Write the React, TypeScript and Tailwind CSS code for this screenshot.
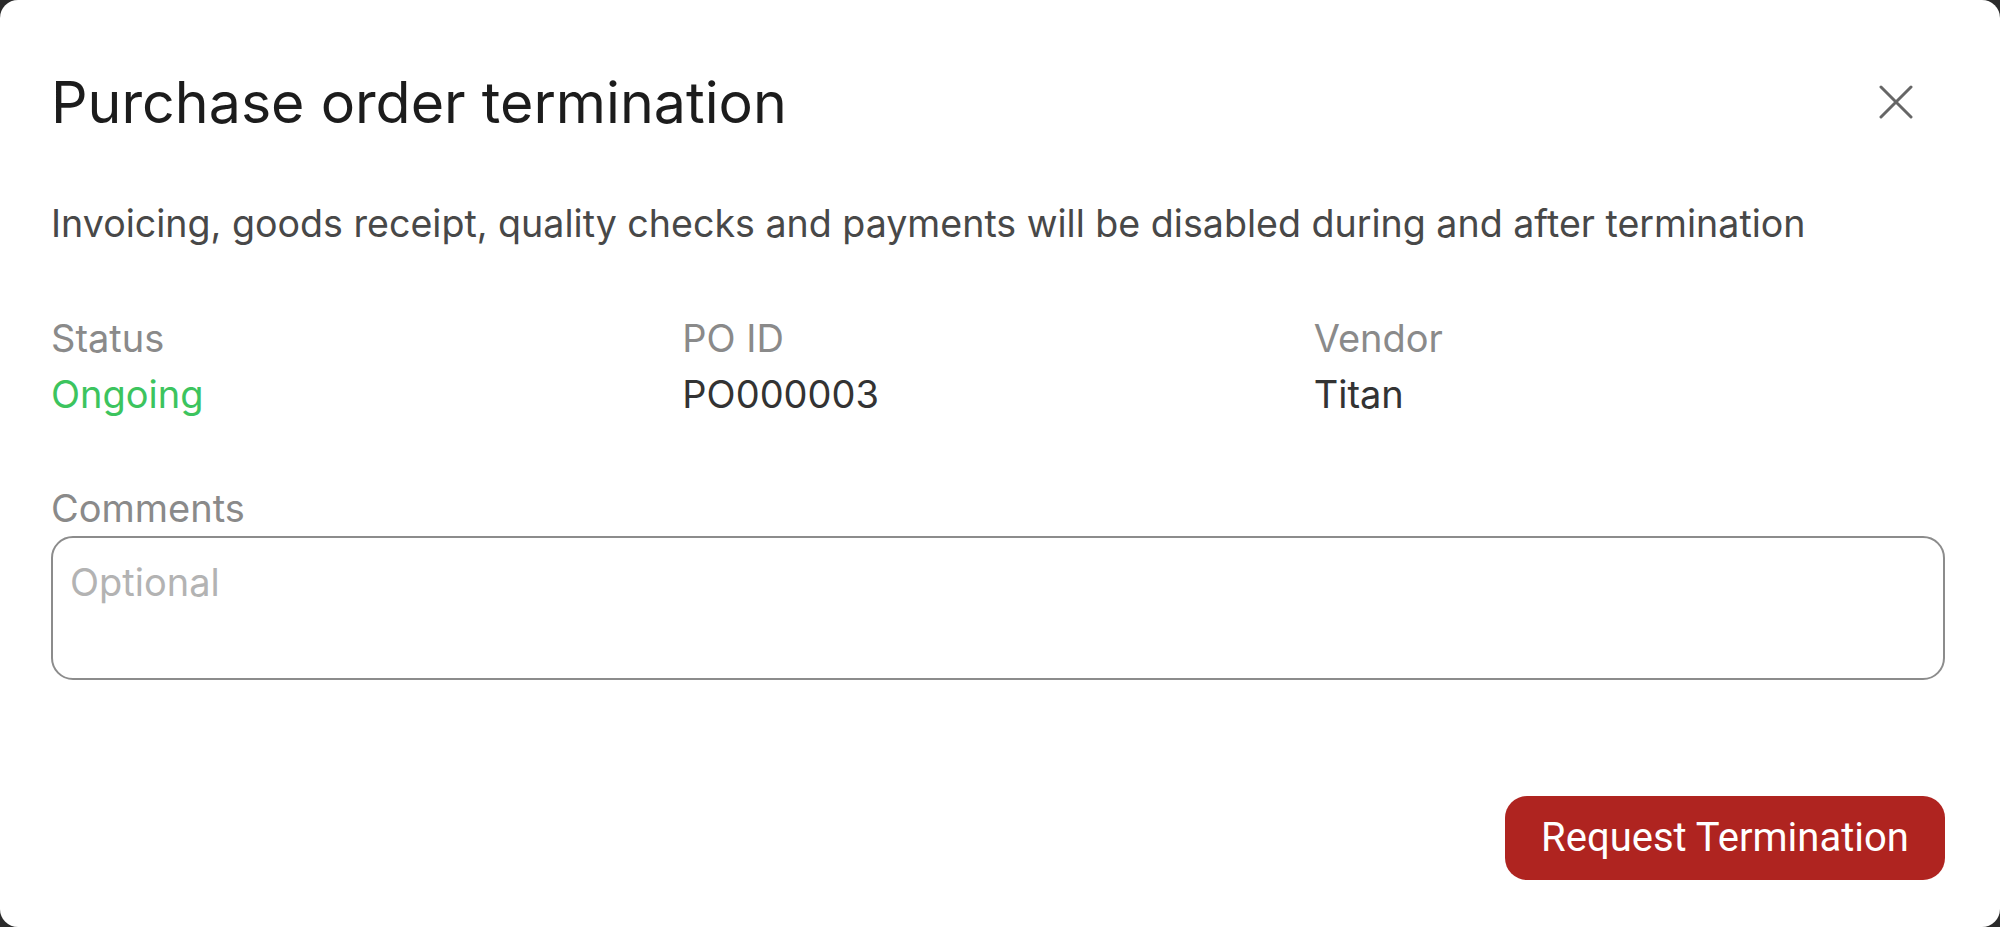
import React from "react";

export default function App() {
  return (
    <div className="h-screen w-screen bg-[#2b2b2b]">
      <div className="h-full w-full bg-white rounded-[18px] flex flex-col pl-[51px] pr-[55px] font-['Inter',sans-serif]">
        {/* header */}
        <div className="flex items-center justify-between pt-[66px]">
          <h1 className="text-[57.3px] leading-[72px] text-[#1c1c1c]">Purchase order termination</h1>
          <button className="w-[34px] h-[34px] flex items-center justify-center mr-[32px] text-[#666666]">
            <svg width="34" height="34" viewBox="0 0 34 34" fill="none" stroke="currentColor" strokeWidth="3" strokeLinecap="round">
              <path d="M2 2 L32 32 M32 2 L2 32" />
            </svg>
          </button>
        </div>

        <p className="mt-[62px] text-[37.6px] leading-[48px] text-[#484848]">
          Invoicing, goods receipt, quality checks and payments will be disabled during and after termination
        </p>

        <div className="grid grid-cols-3 mt-[62px] text-[38px] leading-[56px]">
          <div className="flex flex-col">
            <span className="text-[#8a8a8a]">Status</span>
            <span className="text-[#3cc45e]">Ongoing</span>
          </div>
          <div className="flex flex-col">
            <span className="text-[#8a8a8a]">PO ID</span>
            <span className="text-[#333333]">PO000003</span>
          </div>
          <div className="flex flex-col">
            <span className="text-[#8a8a8a]">Vendor</span>
            <span className="text-[#333333]">Titan</span>
          </div>
        </div>

        <div className="mt-[62px] flex flex-col">
          <label className="text-[38px] leading-[48px] text-[#8a8a8a]">Comments</label>
          <textarea
            placeholder="Optional"
            className="mt-[4px] h-[144px] w-full rounded-[22px] border-2 border-[#8c8c8c] px-[17px] pt-[20px] pb-[10px] text-[38px] leading-[48px] text-[#333333] placeholder:text-[#b3b3b3] outline-none resize-none"
          />
        </div>

        <div className="flex justify-end mt-[116px]">
          <button className="h-[84px] w-[440px] rounded-[22px] bg-[#af2420] text-white text-[40px] font-['Roboto',sans-serif]">
            Request Termination
          </button>
        </div>
      </div>
    </div>
  );
}
